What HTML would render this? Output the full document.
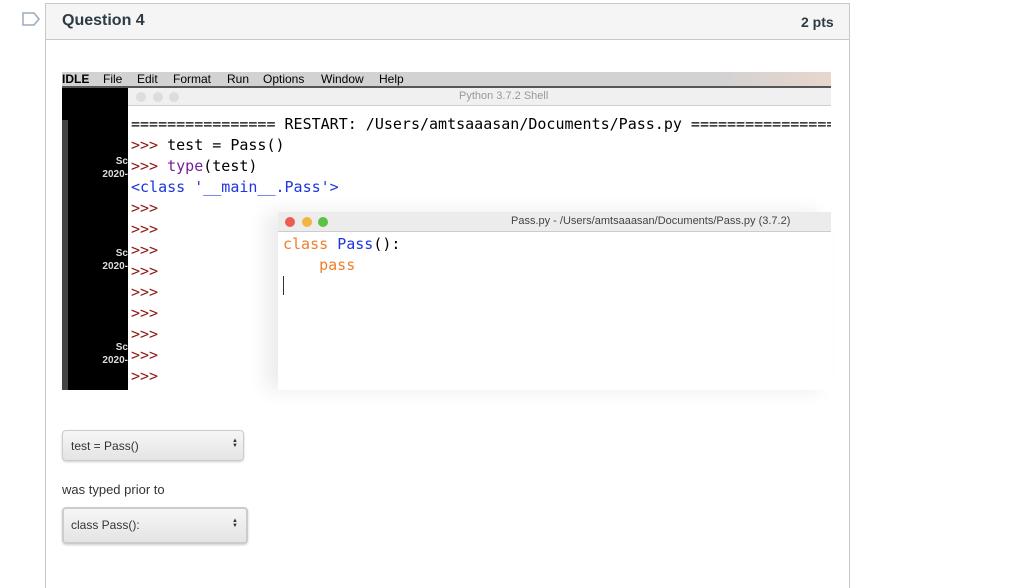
<!DOCTYPE html>
<html style="height:588px;overflow:hidden"><head><style>
body{margin:0;width:1024px;height:588px;background:#fff;position:relative;overflow:hidden;font-family:"Liberation Sans",sans-serif}
.a{position:absolute}
.mono{font-family:"DejaVu Sans Mono","Liberation Mono",monospace;font-size:15px;white-space:pre;line-height:21px}
.p{color:#8b1a12}
.sel{position:absolute;border:1px solid #ccc;border-radius:4px;background:linear-gradient(#f6f6f6,#e4e4e4);box-shadow:0 1px 2px rgba(0,0,0,.2);font-size:12px;color:#333}
.m{position:absolute;top:0}
</style></head><body>
<svg class="a" style="left:22px;top:12px" width="18" height="14"><path d="M1 1H12L17 7L12 13H1Z" fill="none" stroke="#9aaabb" stroke-width="1.5"/></svg>
<div class="a" style="left:45px;top:3px;width:803px;height:600px;border:1px solid #c8c8c8;border-bottom:none"></div>
<div class="a" style="left:46px;top:4px;width:803px;height:35px;background:#f5f5f5;border-bottom:1px solid #c8c8c8"></div>
<div class="a" style="left:62px;top:12px;font-size:16px;font-weight:bold;color:#2d3b45">Question 4</div>
<div class="a" style="left:801px;top:14px;font-size:14px;font-weight:bold;color:#2d3b45">2 pts</div>

<div class="a" style="left:62px;top:72px;width:769px;height:14px;background:linear-gradient(90deg,#d2d2d2 85%,#e8d6cc);border-bottom:2px solid #555;font-size:12px;line-height:14px">
<span class="m" style="left:0;font-weight:bold">IDLE</span><span class="m" style="left:41px">File</span><span class="m" style="left:75px">Edit</span><span class="m" style="left:111px">Format</span><span class="m" style="left:165px">Run</span><span class="m" style="left:201px">Options</span><span class="m" style="left:259px">Window</span><span class="m" style="left:317px">Help</span></div>
<div class="a" style="left:62px;top:88px;width:66px;height:302px;background:#000"></div>
<div class="a" style="left:62px;top:120px;width:6px;height:270px;background:#444"></div>
<div class="a" style="left:98px;top:155px;color:#ddd;font-size:10px;font-weight:bold;text-align:right;width:30px;line-height:13px">Sc<br>2020-</div>
<div class="a" style="left:98px;top:247px;color:#ddd;font-size:10px;font-weight:bold;text-align:right;width:30px;line-height:13px">Sc<br>2020-</div>
<div class="a" style="left:98px;top:341px;color:#ddd;font-size:10px;font-weight:bold;text-align:right;width:30px;line-height:13px">Sc<br>2020-</div>

<div class="a" style="left:128px;top:88px;width:703px;height:302px;background:#fff"></div>
<div class="a" style="left:128px;top:88px;width:703px;height:17px;background:#f0f0f0;border-bottom:1px solid #d0d0d0;font-size:11px;color:#999;line-height:17px"><span style="margin-left:331px">Python 3.7.2 Shell</span></div>
<div class="a" style="left:136px;top:92px;width:10px;height:10px;border-radius:5px;background:#ddd"></div>
<div class="a" style="left:153px;top:92px;width:10px;height:10px;border-radius:5px;background:#ddd"></div>
<div class="a" style="left:169px;top:92px;width:10px;height:10px;border-radius:5px;background:#ddd"></div>
<div class="a mono" style="left:131px;top:114px;width:700px;overflow:hidden">================ RESTART: /Users/amtsaaasan/Documents/Pass.py ================
<span class="p">&gt;&gt;&gt;</span> test = Pass()
<span class="p">&gt;&gt;&gt;</span> <span style="color:#7a1d9a">type</span>(test)
<span style="color:#1c35e0">&lt;class '__main__.Pass'&gt;</span>
<span class="p">&gt;&gt;&gt;
&gt;&gt;&gt;
&gt;&gt;&gt;
&gt;&gt;&gt;
&gt;&gt;&gt;
&gt;&gt;&gt;
&gt;&gt;&gt;
&gt;&gt;&gt;
&gt;&gt;&gt;</span></div>

<div class="a" style="left:278px;top:212px;width:553px;height:178px;background:#fff;box-shadow:-12px 0 18px rgba(0,0,0,.08)"></div>
<div class="a" style="left:278px;top:212px;width:553px;height:19px;background:#ececec;border-bottom:1px solid #ccc;font-size:11px;color:#444;line-height:19px"><span style="margin-left:233px">Pass.py - /Users/amtsaaasan/Documents/Pass.py (3.7.2)</span></div>
<div class="a" style="left:285px;top:217px;width:10px;height:10px;border-radius:5px;background:#ee5b50"></div>
<div class="a" style="left:302px;top:217px;width:10px;height:10px;border-radius:5px;background:#f4b53f"></div>
<div class="a" style="left:318px;top:217px;width:10px;height:10px;border-radius:5px;background:#5cc144"></div>
<div class="a mono" style="left:283px;top:234px"><span style="color:#f07d2a">class</span> <span style="color:#1c35e0">Pass</span>():
    <span style="color:#f07d2a">pass</span></div>
<div class="a" style="left:283px;top:276px;width:1px;height:19px;background:#333"></div>

<div class="sel" style="left:62px;top:430px;width:180px;height:29px"><span class="a" style="left:8px;top:8px">test = Pass()</span></div>
<div class="a" style="left:62px;top:482px;font-size:13px;color:#333">was typed prior to</div>
<div class="sel" style="left:62px;top:507px;width:182px;height:33px;border:2px solid #ccc"><span class="a" style="left:7px;top:9px">class Pass():</span></div>
<div class="a" style="left:232px;top:439px;font-size:6px;line-height:5px;color:#333">▲<br>▼</div>
<div class="a" style="left:232px;top:519px;font-size:6px;line-height:5px;color:#333">▲<br>▼</div>
</body></html>
